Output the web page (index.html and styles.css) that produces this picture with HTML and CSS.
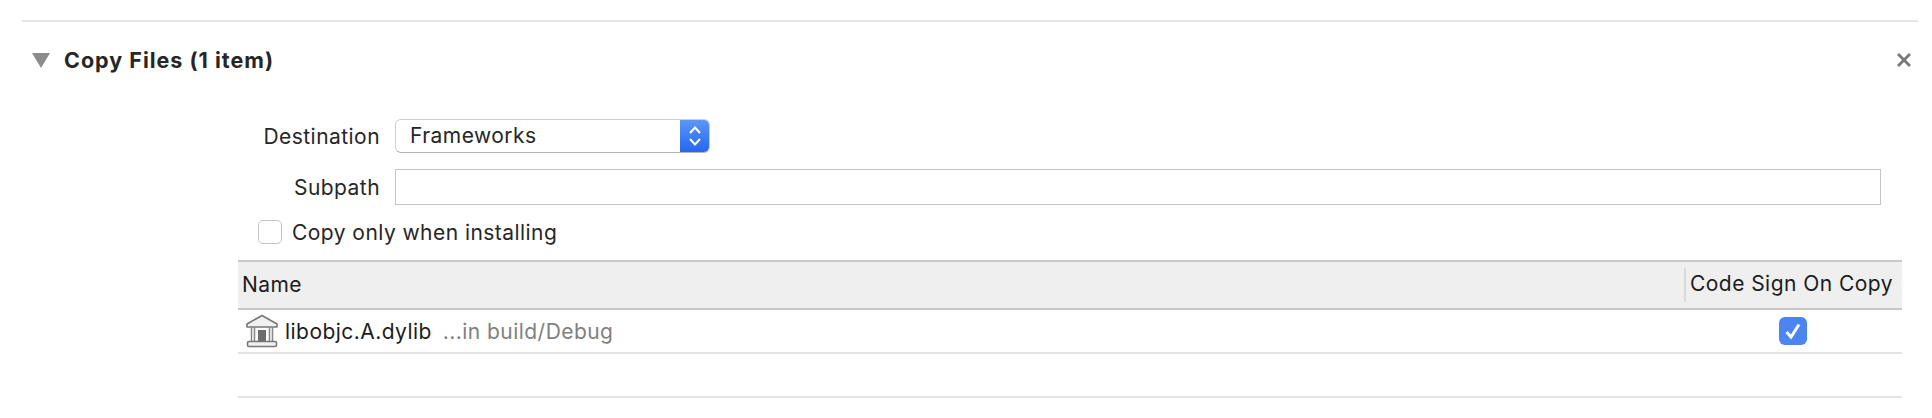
FILE: index.html
```html
<!DOCTYPE html>
<html lang="en">
<head>
<meta charset="UTF-8">
<title>Copy Files</title>
<link rel="stylesheet" href="styles.css">
</head>
<body>
<section class="phase">
    <div class="phase-head">
        <svg class="disclosure" width="18" height="15" viewBox="0 0 18 15"><path d="M0 0H18L9 15Z" fill="#8c8c8c"/></svg>
        <h2 class="phase-title">Copy Files (1 item)</h2>
        <svg class="close" width="14" height="14" viewBox="0 0 14 14"><path d="M1 1L13 13M13 1L1 13" stroke="#777" stroke-width="2.8" fill="none"/></svg>
    </div>

    <div class="form">
        <div class="form-row row-destination">
            <label class="form-label">Destination</label>
            <div class="popup">
                <span class="popup-value">Frameworks</span>
                <span class="popup-arrows">
                    <svg width="14" height="24" viewBox="0 0 14 24"><path d="M2 9L7 3.5L12 9M2 15L7 20.5L12 15" stroke="#fff" stroke-width="2" fill="none"/></svg>
                </span>
            </div>
        </div>
        <div class="form-row row-subpath">
            <label class="form-label">Subpath</label>
            <div class="text-input"></div>
        </div>
        <div class="check-row">
            <span class="checkbox"></span>
            <span>Copy only when installing</span>
        </div>
    </div>

    <div class="table">
        <div class="table-head">
            <div class="col-name">Name</div>
            <div class="col-sign">Code Sign On Copy</div>
        </div>
        <div class="table-row">
            <div class="cell-name">
                <svg class="lib-icon" width="34" height="34" viewBox="0 0 34 34">
                    <path d="M17 1.5L32 10V13H2V10Z" fill="#f1f1f1" stroke="#777" stroke-width="1.6" stroke-linejoin="round"/>
                    <path d="M6.5 13V27M9.5 13V27M24.5 13V27M27.5 13V27" stroke="#8a8a8a" stroke-width="1.6"/>
                    <rect x="13" y="16" width="8" height="11" fill="#6d6d6d"/>
                    <rect x="2.5" y="27.5" width="29" height="5" rx="1.5" fill="#f1f1f1" stroke="#777" stroke-width="1.6"/>
                </svg>
                <span class="lib-name">libobjc.A.dylib</span>
                <span class="lib-path">...in build/Debug</span>
            </div>
            <div class="cell-sign">
                <span class="checkbox-on">
                    <svg width="20" height="20" viewBox="0 0 20 20"><path d="M3.5 11L8 16L16 3.5" stroke="#fff" stroke-width="3" fill="none"/></svg>
                </span>
            </div>
        </div>
        <div class="table-empty"></div>
    </div>
</section>
</body>
</html>
```

FILE: styles.css
```css
body {
    margin: 0;
    background: #fff;
    color: #262626;
    font-family: Inter, "Liberation Sans", sans-serif;
    font-size: 21px;
    letter-spacing: 0.45px;
    overflow: hidden;
}
.phase {
    margin: 20px 14px 0 22px;
    border-top: 2px solid #e6e6e6;
}
.phase-head {
    display: flex;
    align-items: center;
    height: 76px;
    padding: 0 7px 0 10px;
}
.disclosure {
    margin-right: 14px;
}
.phase-title {
    flex: 1;
    margin: 0;
    font-size: 21.5px;
    font-weight: 700;
    letter-spacing: 1px;
}
.form {
    padding-top: 20px;
    padding-left: 216px;
}
.form-row {
    display: flex;
    align-items: center;
}
.form-label {
    width: 157px;
    box-sizing: border-box;
    padding-right: 15px;
    text-align: right;
}
.row-destination {
    height: 36px;
}
.row-subpath {
    height: 36px;
    margin-top: 15px;
}
.popup {
    display: flex;
    width: 315px;
    height: 34px;
    box-sizing: border-box;
    border: 1px solid #cfcfcf;
    border-bottom-color: #b5b5b5;
    border-radius: 6px;
    background: #fff;
    overflow: hidden;
}
.popup-value {
    flex: 1;
    padding-left: 14px;
    line-height: 31px;
}
.popup-arrows {
    display: flex;
    align-items: center;
    justify-content: center;
    width: 29px;
    background: linear-gradient(to bottom, #5b96f6, #2566f0);
}
.text-input {
    width: 1486px;
    height: 36px;
    box-sizing: border-box;
    border: 1.5px solid #c4c4c4;
    background: #fff;
}
.check-row {
    display: flex;
    align-items: center;
    height: 24px;
    margin-top: 15px;
    padding-left: 20px;
}
.checkbox {
    width: 24px;
    height: 24px;
    box-sizing: border-box;
    margin-right: 10px;
    border: 1px solid #c4c4c4;
    border-radius: 5px;
    background: #fff;
}
.table {
    margin: 16px 16px 0 216px;
    color: #1c1c1c;
}
.table-head {
    display: flex;
    align-items: center;
    height: 46px;
    border-top: 2px solid #c8c8c8;
    border-bottom: 2px solid #c8c8c8;
    background: #efefef;
}
.col-name {
    flex: 1;
    padding-left: 4px;
    line-height: 44px;
}
.col-sign {
    width: 218px;
    height: 34px;
    line-height: 32px;
    box-sizing: border-box;
    padding-left: 4px;
    border-left: 2px solid #dadada;
    white-space: nowrap;
}
.table-row {
    display: flex;
    align-items: center;
    height: 42px;
    border-bottom: 2px solid #e4e4e4;
}
.cell-name {
    flex: 1;
    display: flex;
    align-items: center;
    padding-left: 7px;
}
.lib-icon {
    margin-right: 6px;
}
.lib-path {
    margin-left: 11px;
    color: #808080;
}
.cell-sign {
    width: 218px;
    display: flex;
    justify-content: center;
}
.checkbox-on {
    display: flex;
    align-items: center;
    justify-content: center;
    width: 28px;
    height: 28px;
    border-radius: 6px;
    background: #4a85f2;
}
.table-empty {
    height: 42px;
    border-bottom: 2px solid #e4e4e4;
}
```
